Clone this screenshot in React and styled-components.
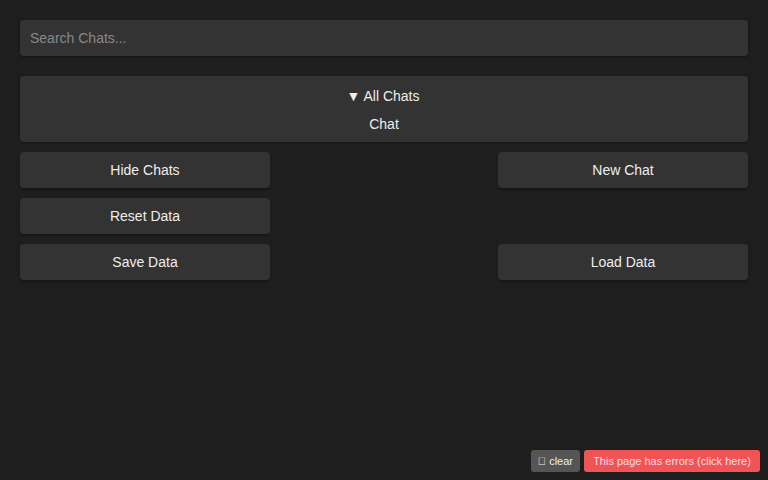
import React from "react";
import styled, { createGlobalStyle } from "styled-components";

const Global = createGlobalStyle`
  html, body { margin: 0; padding: 0; background: #1e1e1e; }
  body { font-family: "Liberation Sans", Arial, sans-serif; color: #eee; }
  * { box-sizing: border-box; }
`;

const Page = styled.div`
  min-height: 480px;
  padding: 20px;
  display: flex;
  flex-direction: column;
`;

const Search = styled.input`
  height: 36px;
  width: 100%;
  border: none;
  border-radius: 4px;
  background: #333;
  color: #eee;
  font: 14px "Liberation Sans", Arial, sans-serif;
  padding: 0 10px;
  outline: none;
  box-shadow: 0 1px 2px rgba(0,0,0,0.3);
  &::placeholder { color: #888; }
`;

const Details = styled.details`
  margin-top: 20px;
  background: #333;
  border-radius: 4px;
  padding: 10px 0 8px;
  text-align: center;
  font-size: 14px;
  box-shadow: 0 1px 2px rgba(0,0,0,0.3);
`;

const Summary = styled.summary`
  list-style: none;
  line-height: 20px;
  cursor: pointer;
  margin-left: -2px;
  &::-webkit-details-marker { display: none; }
`;

const Item = styled.div`
  line-height: 20px;
  margin-top: 8px;
`;

const Grid = styled.div`
  margin-top: 10px;
  display: grid;
  grid-template-columns: 250px 1fr 250px;
  row-gap: 10px;
`;

const Button = styled.button`
  grid-column: ${(p) => p.$col};
  height: 36px;
  border: none;
  border-radius: 4px;
  background: #333;
  color: #eee;
  font: 14px "Liberation Sans", Arial, sans-serif;
  box-shadow: 0 2px 2px rgba(0,0,0,0.25);
  cursor: pointer;
`;

const ErrorBar = styled.div`
  position: fixed;
  right: 8px;
  bottom: 8px;
  display: flex;
  gap: 4px;
  font: 11px "Liberation Sans", Arial, sans-serif;
`;

const Clear = styled.div`
  height: 22px;
  line-height: 22px;
  padding: 0 7px 0 7px;
  border-radius: 3px;
  background: #555;
  color: #eee;
`;

const Err = styled.div`
  height: 22px;
  line-height: 22px;
  padding: 0 8px 0 8px;
  width: 176px;
  text-align: center;
  border-radius: 3px;
  background: #f05454;
  color: #fde;
`;

export default function App() {
  return (
    <>
      <Global />
      <Page>
        <Search placeholder="Search Chats..." />
        <Details open>
          <Summary>▼ All Chats</Summary>
          <Item>Chat</Item>
        </Details>
        <Grid>
          <Button $col={1}>Hide Chats</Button>
          <Button $col={3}>New Chat</Button>
          <Button $col={1}>Reset Data</Button>
          <Button $col={1}>Save Data</Button>
          <Button $col={3}>Load Data</Button>
        </Grid>
      </Page>
      <ErrorBar>
        <Clear>{"\uf1f8"} clear</Clear>
        <Err>This page has errors (click here)</Err>
      </ErrorBar>
    </>
  );
}
